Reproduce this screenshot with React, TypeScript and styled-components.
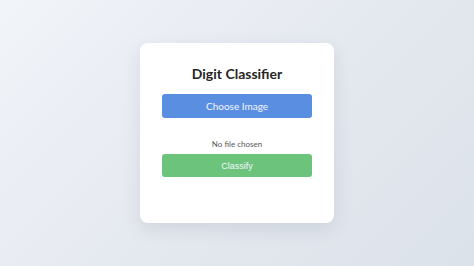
import React, { useRef, useState } from "react";
import styled, { createGlobalStyle } from "styled-components";

const GlobalStyle = createGlobalStyle`
  html, body, #root {
    margin: 0;
    height: 100%;
  }
  body {
    background: linear-gradient(135deg, #f1f4f9 0%, #e4e8ef 55%, #dce2ea 100%);
    font-family: Lato, "Open Sans", sans-serif;
  }
`;

const Page = styled.main`
  height: 100%;
  display: flex;
  align-items: center;
  justify-content: center;
`;

const Card = styled.section`
  width: 194px;
  box-sizing: border-box;
  padding: 22px 22px 46px;
  background: #ffffff;
  border-radius: 8px;
  box-shadow: 0 6px 18px rgba(60, 70, 90, 0.12);
  display: flex;
  flex-direction: column;
  align-items: stretch;
`;

const Title = styled.h1`
  margin: 0;
  font-size: 14px;
  line-height: 18px;
  font-weight: 700;
  color: #262626;
  text-align: center;
`;

const ActionButton = styled.button<{ tone: "blue" | "green" }>`
  display: block;
  width: 100%;
  border: 0;
  border-radius: 3px;
  color: #f4f7ff;
  cursor: pointer;
  background: ${(p) => (p.tone === "blue" ? "#5a8ee0" : "#6cc37b")};
  height: ${(p) => (p.tone === "blue" ? "24px" : "23px")};
  margin-top: ${(p) => (p.tone === "blue" ? "11px" : "4.5px")};
  font-family: ${(p) =>
    p.tone === "blue" ? 'Lato, "Open Sans", sans-serif' : '"Liberation Sans", Arial, sans-serif'};
  font-size: ${(p) => (p.tone === "blue" ? "10px" : "9px")};
`;

const HiddenInput = styled.input`
  display: none;
`;

const FileName = styled.p`
  margin: 19.5px 0 0;
  font-size: 8px;
  line-height: 12px;
  color: #555;
  text-align: center;
`;

export default function App() {
  const inputRef = useRef<HTMLInputElement>(null);
  const [fileName, setFileName] = useState("No file chosen");

  const onFile = (e: React.ChangeEvent<HTMLInputElement>) => {
    const file = e.target.files?.[0];
    setFileName(file ? file.name : "No file chosen");
  };

  return (
    <Page>
      <GlobalStyle />
      <Card>
        <Title>Digit Classifier</Title>
        <ActionButton tone="blue" onClick={() => inputRef.current?.click()}>
          Choose Image
        </ActionButton>
        <HiddenInput ref={inputRef} type="file" accept="image/*" onChange={onFile} />
        <FileName>{fileName}</FileName>
        <ActionButton tone="green">Classify</ActionButton>
      </Card>
    </Page>
  );
}
